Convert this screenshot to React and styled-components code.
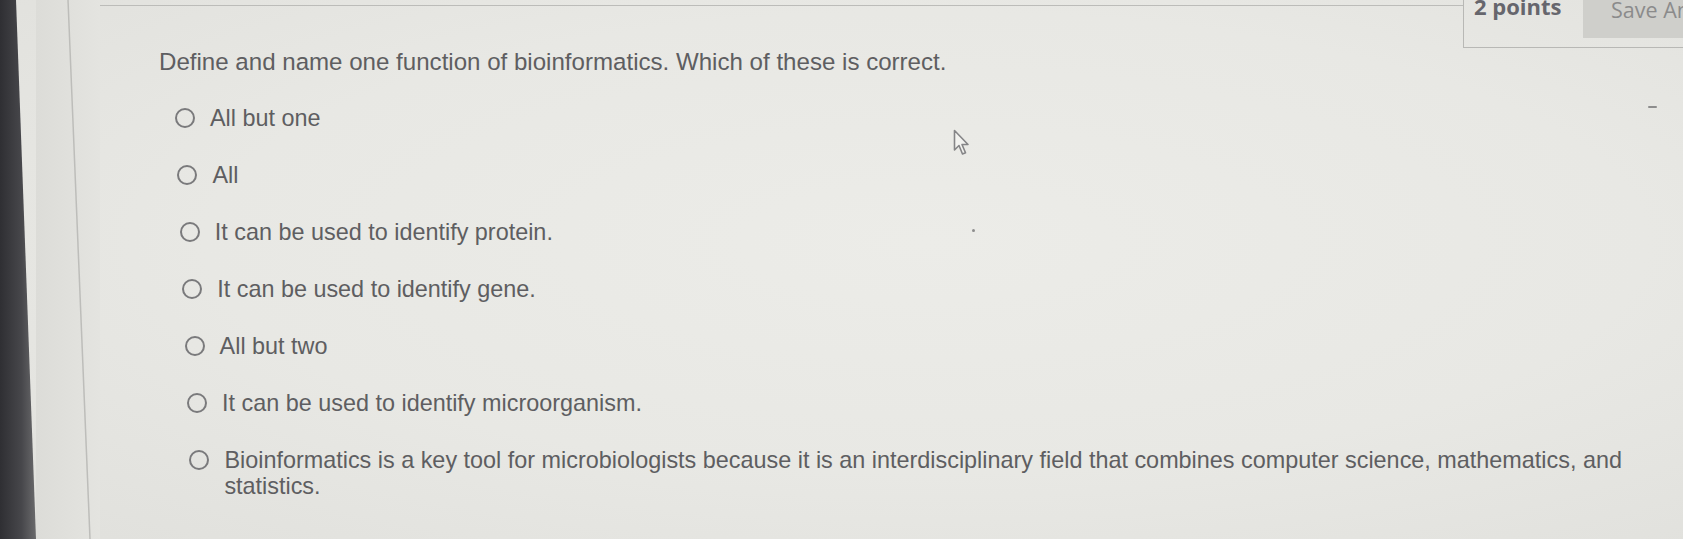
import React from "react";
import styled, { createGlobalStyle } from "styled-components";

const GlobalStyle = createGlobalStyle`
  html, body {
    margin: 0;
    padding: 0;
    background: #e5e5e1;
  }
  body {
    font-family: "Liberation Sans", Arial, sans-serif;
    color: #5e5e61;
  }
`;

const Screen = styled.div`
  position: relative;
  display: flex;
  width: 1683px;
  height: 539px;
  overflow: hidden;
  background: radial-gradient(ellipse at 55% 45%, #ecece8 0%, #e8e8e4 55%, #e0e0dc 100%);
`;

const Bezel = styled.div`
  flex: 0 0 36px;
  background: linear-gradient(90deg, #2f2f33 0%, #47474b 60%, #6a6a6c 100%);
  clip-path: polygon(0 0, 16px 0, 36px 100%, 0 100%);
`;

const Gutter = styled.div`
  flex: 0 0 64px;
  background: linear-gradient(90deg, #dcdcd8, #e4e4e0);
  svg {
    display: block;
  }
`;

const Main = styled.div`
  flex: 1;
  display: flex;
  flex-direction: column;
  min-width: 0;
`;

const TopBar = styled.div`
  display: flex;
  height: 46px;
`;

const Rule = styled.div`
  flex: 1;
  height: 5px;
  border-bottom: 1.5px solid #bcbcb9;
`;

const PointsBox = styled.div`
  flex: 0 0 220px;
  height: 48px;
  display: flex;
  align-items: flex-start;
  border-left: 1.5px solid #b8b8b5;
  border-bottom: 1.5px solid #b8b8b5;
  box-sizing: border-box;
`;

const Points = styled.div`
  flex: 0 0 auto;
  margin: -8px 0 0 10px;
  font-family: "Open Sans", "Liberation Sans", sans-serif;
  font-weight: 700;
  font-size: 22px;
  line-height: 28px;
  color: #66666d;
`;

const SaveButton = styled.div`
  margin-left: auto;
  flex: 0 0 100px;
  height: 38px;
  padding-left: 28px;
  box-sizing: border-box;
  background: #cfcfcb;
  font-family: "Open Sans", "Liberation Sans", sans-serif;
  font-size: 21.5px;
  line-height: 20px;
  color: #8b8b8b;
  white-space: nowrap;
  overflow: hidden;
`;

const Body = styled.div`
  padding: 3px 0 0 59px;
`;

const Question = styled.div`
  font-size: 24.1px;
  line-height: 26px;
`;

const OptionList = styled.div`
  display: flex;
  flex-direction: column;
  gap: 31px;
  margin-top: 30px;
`;

const Option = styled.label`
  display: flex;
  align-items: flex-start;
  gap: 15px;
  padding-left: ${(p) => 16 + p.$index * 2.4}px;
  font-size: 23.4px;
  line-height: 26px;
`;

const Radio = styled.span`
  flex: 0 0 20px;
  height: 20px;
  margin-top: 3px;
  border: 2px solid #7a7a7c;
  border-radius: 50%;
  box-sizing: border-box;
`;

const Label = styled.span`
  max-width: 1430px;
`;

const Cursor = styled.svg`
  position: absolute;
  left: 953px;
  top: 129px;
`;

const Speck = styled.span`
  position: absolute;
  left: ${(p) => p.$x}px;
  top: ${(p) => p.$y}px;
  width: ${(p) => p.$w}px;
  height: ${(p) => p.$h}px;
  background: #8d8d8d;
  border-radius: 2px;
`;

const options = [
  "All but one",
  "All",
  "It can be used to identify protein.",
  "It can be used to identify gene.",
  "All but two",
  "It can be used to identify microorganism.",
  "Bioinformatics is a key tool for microbiologists because it is an interdisciplinary field that combines computer science, mathematics, and statistics.",
];

export default function App() {
  return (
    <>
      <GlobalStyle />
      <Screen>
        <Bezel />
        <Gutter>
          <svg width="64" height="539">
            <line x1="32" y1="0" x2="54" y2="539" stroke="#bdbdba" strokeWidth="1.5" />
          </svg>
        </Gutter>
        <Main>
          <TopBar>
            <Rule />
            <PointsBox>
              <Points>2 points</Points>
              <SaveButton>Save Answer</SaveButton>
            </PointsBox>
          </TopBar>
          <Body>
            <Question>
              Define and name one function of bioinformatics. Which of these is correct.
            </Question>
            <OptionList>
              {options.map((text, i) => (
                <Option key={i} $index={i}>
                  <Radio />
                  <Label>{text}</Label>
                </Option>
              ))}
            </OptionList>
          </Body>
        </Main>
        <Cursor width="16" height="28" viewBox="0 0 16 28">
          <path
            d="M1.5 1.5 L1.5 21 L6 16.5 L9.5 25 L12.5 23.8 L9 15.5 L15 15.5 Z"
            fill="#f2f2ef"
            stroke="#858587"
            strokeWidth="1.6"
            strokeLinejoin="round"
          />
        </Cursor>
        <Speck $x={972} $y={229} $w={3} $h={3} />
        <Speck $x={1648} $y={106} $w={9} $h={2} />
      </Screen>
    </>
  );
}
